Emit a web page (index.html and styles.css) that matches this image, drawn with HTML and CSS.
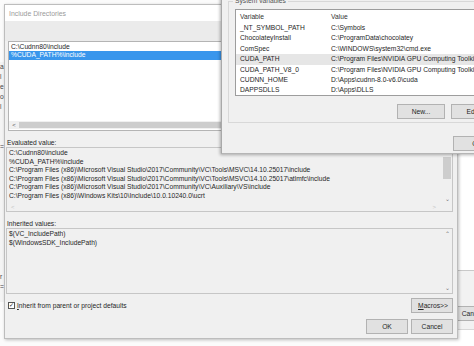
FILE: index.html
```html
<!DOCTYPE html>
<html lang="en">
<head>
  <meta charset="UTF-8">
  <title>Include Directories</title>
  <link rel="stylesheet" href="styles.css">
</head>
<body>
  <div class="desktop">

    <div class="bgwin bg-left">
      <div class="frag">a</div>
      <div class="frag">l</div>
      <div class="frag">e</div>
      <div class="frag">o</div>
      <div class="frag">l</div>
      <div class="frag gap">=</div>
      <div class="frag gap2">r</div>
      <div class="frag">=</div>
    </div>

    <div class="bgwin bg-right">
      <div class="bg-right-band">
        <span class="btn bg-btn">Canc</span>
      </div>
    </div>

    <!-- Include Directories dialog -->
    <div class="dlg inc">
      <div class="title">Include Directories</div>
      <div class="toolbar"></div>
      <div class="body">
        <div class="listbox">
          <div class="lb-rows">
            <div class="lb-row">C:\Cudnn80\include</div>
            <div class="lb-row sel">%CUDA_PATH%\include</div>
          </div>
          <div class="hscroll">
            <span class="arrow">&lt;</span>
            <span class="thumb"></span>
          </div>
        </div>

        <div class="label">Evaluated value:</div>
        <div class="textbox eval">
          <div class="tb-lines">
            <div>C:\Cudnn80\include</div>
            <div>%CUDA_PATH%\include</div>
            <div>C:\Program Files (x86)\Microsoft Visual Studio\2017\Community\VC\Tools\MSVC\14.10.25017\include</div>
            <div>C:\Program Files (x86)\Microsoft Visual Studio\2017\Community\VC\Tools\MSVC\14.10.25017\atlmfc\include</div>
            <div>C:\Program Files (x86)\Microsoft Visual Studio\2017\Community\VC\Auxiliary\VS\include</div>
            <div>C:\Program Files (x86)\Windows Kits\10\Include\10.0.10240.0\ucrt</div>
          </div>
          <div class="vscroll">
            <span class="vthumb"></span>
            <span class="varrow">&#8964;</span>
          </div>
          <div class="hbar">
            <span class="dim">&lt;</span>
            <span class="dim">&gt;</span>
          </div>
        </div>

        <div class="label">Inherited values:</div>
        <div class="textbox inh">
          <div class="tb-lines">
            <div>$(VC_IncludePath)</div>
            <div>$(WindowsSDK_IncludePath)</div>
          </div>
          <div class="vscroll plain">
            <span class="varrow">&#8963;</span>
            <span class="varrow">&#8964;</span>
          </div>
        </div>

        <div class="opts">
          <label class="check"><span class="box">&#10003;</span><span><u>I</u>nherit from parent or project defaults</span></label>
          <span class="btn">&nbsp;<u>M</u>acros&gt;&gt;</span>
        </div>
        <div class="actions">
          <span class="btn">OK</span>
          <span class="btn">Cancel</span>
        </div>
      </div>
    </div>

    <!-- Environment Variables dialog (in front) -->
    <div class="dlg env">
      <div class="group">
        <div class="group-label">System variables</div>
        <div class="listview">
          <div class="lv-row head"><span class="c1">Variable</span><span>Value</span></div>
          <div class="lv-row"><span class="c1">_NT_SYMBOL_PATH</span><span>C:\Symbols</span></div>
          <div class="lv-row"><span class="c1">ChocolateyInstall</span><span>C:\ProgramData\chocolatey</span></div>
          <div class="lv-row"><span class="c1">ComSpec</span><span>C:\WINDOWS\system32\cmd.exe</span></div>
          <div class="lv-row hot"><span class="c1">CUDA_PATH</span><span>C:\Program Files\NVIDIA GPU Computing Toolkit\CUDA\v9.0</span></div>
          <div class="lv-row"><span class="c1">CUDA_PATH_V8_0</span><span>C:\Program Files\NVIDIA GPU Computing Toolkit\CUDA\v8.0</span></div>
          <div class="lv-row"><span class="c1">CUDNN_HOME</span><span>D:\Apps\cudnn-8.0-v6.0\cuda</span></div>
          <div class="lv-row"><span class="c1">DAPPSDLLS</span><span>D:\Apps\DLLS</span></div>
        </div>
        <div class="group-btns">
          <span class="btn wide">New...</span>
          <span class="btn wide">Edit...</span>
        </div>
      </div>
      <div class="env-foot">
        <span class="btn wide">OK</span>
      </div>
    </div>

  </div>
</body>
</html>
```

FILE: styles.css
```css
body { margin: 0; background: #fff; font-family: "Liberation Sans", Arial, sans-serif; font-size: 6.7px; color: #262626; }
.desktop { position: relative; width: 474px; height: 346px; overflow: hidden; background: #fbfbfb; }

.bgwin { position: absolute; }
.bg-left { left: 0; top: 62px; width: 6px; height: 240px; background: #f4f4f4; }
.frag { padding-left: 0; line-height: 10px; color: #444; }
.frag.gap { margin-top: 30px; }
.frag.gap2 { margin-top: 120px; }
.bg-right { left: 440px; top: 150px; width: 40px; height: 196px; background: #fff; }
.bg-right-band { margin-top: 120px; height: 60px; background: #f2f2f2; border-top: 1px solid #c9c9c9; border-bottom: 1px solid #d8d8d8; box-sizing: border-box; display: flex; align-items: flex-end; padding: 0 0 8px 17px; }
.bg-btn { width: 40px; justify-content: flex-start; padding-left: 2px; }

.dlg { position: absolute; background: #f0f0f0; box-sizing: border-box; }
.inc { left: 4px; top: 4px; width: 454px; height: 335px; border: 1px solid #bdbdbd; box-shadow: 1px 1px 3px rgba(0,0,0,0.25); display: flex; flex-direction: column; }
.title { height: 16px; background: #fff; color: #9a9a9a; padding-left: 4px; line-height: 17px; font-size: 6.9px; }
.toolbar { height: 20px; background: #ebebeb; }
.body { flex: 1; padding: 0 4px 0 1px; display: flex; flex-direction: column; }

.listbox { margin-left: 2px; height: 90px; background: #fff; border: 1px solid #b4b4b4; box-sizing: border-box; display: flex; flex-direction: column; }
.lb-rows { flex: 1; padding-top: 1px; }
.lb-row { height: 8.3px; line-height: 8.3px; padding-left: 2px; }
.lb-row.sel { background: #3996ec; color: #fff; }
.hscroll { height: 8px; background: #f0f0f0; display: flex; align-items: center; margin-bottom: 1px; }
.arrow { width: 10px; text-align: center; color: #555; font-size: 6px; }
.thumb { flex: 1; height: 6px; background: #cdcdcd; }

.label { margin: 9px 0 0 1px; height: 6px; line-height: 6px; }
.textbox { position: relative; margin-top: 1px; height: 65px; border: 1px solid #c6c6c6; background: #f0f0f0; box-sizing: border-box; }
.inh { height: 66px; }
.tb-lines { padding: 1px 0 0 2px; line-height: 8.6px; white-space: nowrap; overflow: hidden; width: 430px; }
.vscroll { position: absolute; right: 0; top: 0; bottom: 9px; width: 10px; display: flex; flex-direction: column; align-items: center; justify-content: space-between; }
.vscroll.plain { bottom: 0; padding: 2px 0; box-sizing: border-box; }
.vthumb { margin-top: 9px; width: 8px; height: 22px; background: #cdcdcd; }
.varrow { color: #777; font-size: 6px; line-height: 6px; }
.hbar { position: absolute; left: 0; right: 12px; bottom: 0; height: 9px; display: flex; justify-content: space-between; align-items: center; padding: 0 4px; }
.dim { color: #c4c4c4; font-size: 6px; }

.opts { margin-top: 4px; display: flex; justify-content: space-between; align-items: center; }
.check { display: flex; align-items: center; gap: 2px; padding-left: 2px; }
.box { width: 7px; height: 7px; border: 1px solid #555; background: #fff; box-sizing: border-box; font-size: 6px; line-height: 5px; text-align: center; color: #222; }
.actions { margin-top: 6px; display: flex; justify-content: flex-end; gap: 3px; }

.btn { display: flex; align-items: center; justify-content: center; width: 42px; height: 15px; background: #e1e1e1; border: 1px solid #b2b2b2; box-sizing: border-box; }
.opts .btn { width: 42px; }

.env { left: 221px; top: -8px; width: 270px; height: 162px; border-left: 1px solid #a9a9a9; border-bottom: 1px solid #b5b5b5; box-shadow: -1px 1px 3px rgba(0,0,0,0.3); padding: 9px 0 0 6px; }
.group { position: relative; border: 1px solid #d8d8d8; border-right: none; height: 122px; box-sizing: border-box; padding: 7px 0 0 6px; }
.group-label { position: absolute; top: -5px; left: 4px; background: #f0f0f0; padding: 0 2px; color: #555; }
.listview { height: 87px; background: #fff; border: 1px solid #9d9d9d; border-right: none; overflow: hidden; box-sizing: border-box; padding-top: 2px; }
.lv-row { height: 10.4px; line-height: 10.4px; display: flex; white-space: nowrap; padding-left: 4px; }
.lv-row.head { color: #333; height: 11px; }
.lv-row.hot { background: #e6e6e6; }
.c1 { width: 91px; flex: none; }
.group-btns { display: flex; gap: 6px; padding-left: 162px; margin-top: 8px; }
.wide { width: 48px; flex: none; }
.env-foot { padding: 13px 0 0 225px; }
```
